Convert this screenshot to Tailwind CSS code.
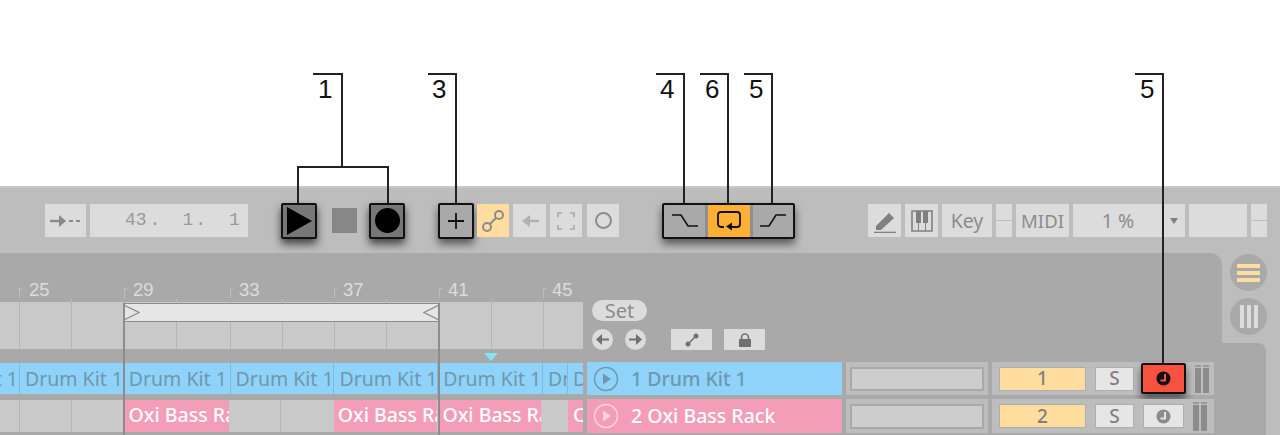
<!DOCTYPE html>
<html lang="en">
<head>
    <meta charset="UTF-8">
    <title>Transport and arrangement controls</title>
    <script src="https://cdn.jsdelivr.net/npm/@tailwindcss/browser@4"></script>
</head>
<body class="bg-white">
<div class="relative w-[1280px] h-[435px] overflow-hidden font-['Noto_Sans',sans-serif]">

    <div class="h-[186px]"></div>

    <!-- Control bar -->
    <div class="h-[67px] bg-[#bdbdbd] border-t-2 border-[#c6c6c6] flex items-center text-[#8c8c8c]">
        <div class="ml-[45px] w-[41px] h-[33px] bg-[#dcdcdc] flex items-center justify-center">
            <svg width="34" height="14" viewBox="0 0 34 14" fill="none"><path d="M1 7h14" stroke="#8a8a8a" stroke-width="2.4"/><path d="M10 1l7 6-7 6z" fill="#8a8a8a"/><path d="M20 7h4M27 7h4" stroke="#8a8a8a" stroke-width="2"/></svg>
        </div>
        <div class="ml-[4px] w-[158px] h-[33px] bg-[#dcdcdc] flex items-center pl-[35px] font-['Liberation_Mono',monospace] text-[18px] text-[#999]">
            <span>43</span><span class="ml-[3px]">.</span><span class="ml-[22px]">1</span><span class="ml-[2px]">.</span><span class="ml-[23px]">1</span>
        </div>

        <div class="ml-[33px] w-[36px] h-[36px] bg-[#777] border-2 border-[#111] rounded-[2px] shadow-[0_5px_8px_rgba(0,0,0,.65)] flex items-center justify-center">
            <svg width="26" height="28" viewBox="0 0 26 28"><path d="M1 0l25 14L1 28z" fill="#000"/></svg>
        </div>
        <div class="ml-[15px] w-[25px] h-[25px] bg-[#878787]"></div>
        <div class="ml-[12px] w-[36px] h-[36px] bg-[#777] border-2 border-[#111] rounded-[2px] shadow-[0_5px_8px_rgba(0,0,0,.65)] flex items-center justify-center">
            <div class="w-[25px] h-[25px] rounded-full bg-black"></div>
        </div>

        <div class="ml-[33px] w-[36px] h-[36px] bg-[#a9a9a9] border-2 border-[#111] rounded-[2px] shadow-[0_5px_8px_rgba(0,0,0,.55)] flex items-center justify-center">
            <svg width="20" height="20" viewBox="0 0 20 20"><path d="M10 2v16M2 10h16" stroke="#111" stroke-width="1.8"/></svg>
        </div>
        <div class="ml-[3px] w-[32px] h-[33px] bg-[#ffdd9e] flex items-center justify-center">
            <svg width="24" height="24" viewBox="0 0 24 24" fill="none" stroke="#8c8c8c" stroke-width="2"><circle cx="6" cy="18" r="4"/><circle cx="18" cy="6" r="4"/><path d="M9 15l6-6"/></svg>
        </div>
        <div class="ml-[4px] w-[33px] h-[33px] bg-[#dcdcdc] flex items-center justify-center">
            <svg width="18" height="14" viewBox="0 0 18 14"><path d="M18 7H7" stroke="#b0b0b0" stroke-width="2.4"/><path d="M9 1L1 7l8 6z" fill="#b0b0b0"/></svg>
        </div>
        <div class="ml-[4px] w-[32px] h-[33px] bg-[#dcdcdc] flex items-center justify-center">
            <svg width="18" height="18" viewBox="0 0 18 18" fill="none" stroke="#a8a8a8" stroke-width="1.6"><path d="M1 5V1h4M13 1h4v4M17 13v4h-4M5 17H1v-4"/></svg>
        </div>
        <div class="ml-[5px] w-[32px] h-[33px] bg-[#dcdcdc] flex items-center justify-center">
            <div class="w-[17px] h-[17px] rounded-full border-2 border-[#8c8c8c]"></div>
        </div>

        <!-- Overdub group -->
        <div class="ml-[43px] w-[133px] h-[36px] border-2 border-[#111] rounded-[2px] shadow-[0_5px_8px_rgba(0,0,0,.55)] flex">
            <div class="w-[44px] bg-[#a9a9a9] flex items-center justify-center border-r-[3px] border-[#8f8f8f]">
                <svg width="28" height="16" viewBox="0 0 28 16" fill="none" stroke="#111" stroke-width="1.6"><path d="M1 2h9l7 11h10"/></svg>
            </div>
            <div class="w-[42px] bg-[#fdb033] flex items-center justify-center">
                <svg width="26" height="20" viewBox="0 0 26 20"><path d="M8 16H5a3 3 0 0 1-3-3V4a3 3 0 0 1 3-3h16a3 3 0 0 1 3 3v9a3 3 0 0 1-3 3h-7" fill="none" stroke="#111" stroke-width="1.8"/><path d="M16 11.500v8l-6-4z" fill="#111"/></svg>
            </div>
            <div class="flex-1 bg-[#a9a9a9] flex items-center justify-center border-l-[3px] border-[#8f8f8f]">
                <svg width="28" height="16" viewBox="0 0 28 16" fill="none" stroke="#111" stroke-width="1.6"><path d="M1 13h9l7-11h10"/></svg>
            </div>
        </div>

        <div class="ml-[73px] w-[33px] h-[33px] bg-[#dcdcdc] flex items-center justify-center">
            <svg width="24" height="24" viewBox="0 0 24 24"><path d="M3 17L16 4l5 5L8 21H3z" fill="#808080"/><path d="M1 23.500h22" stroke="#808080" stroke-width="1.600"/></svg>
        </div>
        <div class="ml-[4px] w-[33px] h-[33px] bg-[#dcdcdc] flex items-center justify-center">
            <svg width="22" height="22" viewBox="0 0 22 22"><path d="M1 1h20v20H1z" fill="none" stroke="#808080" stroke-width="1.6"/><path d="M7.500 1v20M14.500 1v20" stroke="#808080" stroke-width="1"/><path d="M5 1h5v12H5zM12 1h5v12h-5z" fill="#808080"/></svg>
        </div>
        <div class="ml-[4px] w-[50px] h-[33px] bg-[#dcdcdc] flex items-center justify-center text-[19.5px]">Key</div>
        <div class="ml-[4px] w-[16px] h-[33px] flex flex-col gap-px">
            <div class="flex-1 bg-[#dcdcdc]"></div>
            <div class="flex-1 bg-[#dcdcdc]"></div>
        </div>
        <div class="ml-[4px] w-[53px] h-[33px] bg-[#dcdcdc] flex items-center justify-center text-[18.5px]">MIDI</div>
        <div class="ml-[4px] w-[112px] h-[33px] bg-[#dcdcdc] flex items-center text-[19.5px]">
            <span class="w-[90px] text-center">1 %</span>
            <svg width="22" height="6" viewBox="0 0 22 6"><path d="M7 0h8l-4 6z" fill="#808080"/></svg>
        </div>
        <div class="ml-[4px] w-[58px] h-[33px] bg-[#dcdcdc]"></div>
        <div class="ml-[4px] w-[16px] h-[33px] flex flex-col gap-px">
            <div class="flex-1 bg-[#dcdcdc]"></div>
            <div class="flex-1 bg-[#dcdcdc]"></div>
        </div>
    </div>

    <div class="h-[182px] flex bg-[#bdbdbd]">
        <!-- Session / arrangement panel -->
        <div class="w-[1222px] bg-[#a9a9a9] rounded-tr-xl">
            <div class="h-[109px] flex">
                <div class="relative w-[583px]">
                    <!-- Ruler -->
                    <div class="h-[49px] pl-[19px] flex items-end font-['Liberation_Sans',sans-serif] text-[18.5px] leading-[24px] text-[#dcdcdc]">
                        <div class="w-[105px] h-[24px] flex">
                            <div class="self-end mb-[4px] w-[3px] h-[10px] border-l border-t border-[#bdbdbd]"></div>
                            <span class="ml-[7px] w-[42px]">25</span>
                            <div class="self-end w-px h-[3px] bg-[#bdbdbd]"></div>
                        </div>
                        <div class="w-[106px] h-[24px] flex">
                            <div class="self-end mb-[4px] w-[3px] h-[10px] border-l border-t border-[#bdbdbd]"></div>
                            <span class="ml-[6px] w-[43px]">29</span>
                            <div class="self-end w-px h-[3px] bg-[#bdbdbd]"></div>
                        </div>
                        <div class="w-[104px] h-[24px] flex">
                            <div class="self-end mb-[4px] w-[3px] h-[10px] border-l border-t border-[#bdbdbd]"></div>
                            <span class="ml-[6px] w-[43px]">33</span>
                            <div class="self-end w-px h-[3px] bg-[#bdbdbd]"></div>
                        </div>
                        <div class="w-[105px] h-[24px] flex">
                            <div class="self-end mb-[4px] w-[3px] h-[10px] border-l border-t border-[#bdbdbd]"></div>
                            <span class="ml-[6px] w-[43px]">37</span>
                            <div class="self-end w-px h-[3px] bg-[#bdbdbd]"></div>
                        </div>
                        <div class="w-[104px] h-[24px] flex">
                            <div class="self-end mb-[4px] w-[3px] h-[10px] border-l border-t border-[#bdbdbd]"></div>
                            <span class="ml-[6px] w-[43px]">41</span>
                            <div class="self-end w-px h-[3px] bg-[#bdbdbd]"></div>
                        </div>
                        <div class="w-[40px] h-[24px] flex">
                            <div class="self-end mb-[4px] w-[3px] h-[10px] border-l border-t border-[#bdbdbd]"></div>
                            <span class="ml-[6px]">45</span>
                        </div>
                    </div>
                    <!-- Scene grid -->
                    <div class="h-[47px] bg-[#c9c9c9] flex">
                        <div class="w-[20px] border-r border-[#b4b4b4]"></div>
                        <div class="w-[52px] border-r border-[#b4b4b4]"></div>
                        <div class="w-[53px] border-r border-[#b4b4b4]"></div>
                        <div class="w-[52px] border-r border-[#b4b4b4]"></div>
                        <div class="w-[54px] border-r border-[#b4b4b4]"></div>
                        <div class="w-[52px] border-r border-[#b4b4b4]"></div>
                        <div class="w-[52px] border-r border-[#b4b4b4]"></div>
                        <div class="w-[52px] border-r border-[#b4b4b4]"></div>
                        <div class="w-[53px] border-r border-[#b4b4b4]"></div>
                        <div class="w-[52px] border-r border-[#b4b4b4]"></div>
                        <div class="w-[52px] border-r border-[#b4b4b4]"></div>
                    </div>
                    <!-- Loop brace -->
                    <div class="absolute left-[124px] top-[50px] w-[315px] h-[19px] bg-[#e6e6e6] border-y border-[#8c8c8c]">
                        <svg class="absolute left-0 top-0" width="16" height="17" viewBox="0 0 16 17" fill="none" stroke="#8c8c8c" stroke-width="1.2"><path d="M0 1l15 7.500L0 16"/></svg>
                        <svg class="absolute right-0 top-0" width="16" height="17" viewBox="0 0 16 17" fill="none" stroke="#8c8c8c" stroke-width="1.2"><path d="M16 1L1 8.500 16 16"/></svg>
                    </div>
                    <!-- Insert marker -->
                    <svg class="absolute left-[484px] top-[100px]" width="14" height="8" viewBox="0 0 14 8"><path d="M0 0h14L7 8z" fill="#7fe6f2"/></svg>
                </div>
                <div class="ml-[9px] pt-[47px]">
                    <div class="w-[55px] h-[21px] rounded-full bg-[#dcdcdc] flex items-center justify-center text-[20px] text-[#8c8c8c]">Set</div>
                    <div class="mt-[8px] flex items-center">
                        <div class="w-[21px] h-[21px] rounded-full bg-[#dcdcdc] flex items-center justify-center">
                            <svg width="13" height="11" viewBox="0 0 13 11"><path d="M13 5.500H5" stroke="#707070" stroke-width="2"/><path d="M6 0L0 5.500 6 11z" fill="#707070"/></svg>
                        </div>
                        <div class="ml-[12px] w-[21px] h-[21px] rounded-full bg-[#dcdcdc] flex items-center justify-center">
                            <svg width="13" height="11" viewBox="0 0 13 11"><path d="M0 5.500h8" stroke="#707070" stroke-width="2"/><path d="M7 0l6 5.500L7 11z" fill="#707070"/></svg>
                        </div>
                        <div class="ml-[25px] w-[41px] h-[21px] bg-[#dcdcdc] flex items-center justify-center">
                            <svg width="14" height="14" viewBox="0 0 14 14" fill="#707070"><circle cx="3" cy="11" r="2.500"/><circle cx="11" cy="3" r="2.500"/><path d="M3 11l8-8" stroke="#707070" stroke-width="1.6"/></svg>
                        </div>
                        <div class="ml-[12px] w-[41px] h-[21px] bg-[#dcdcdc] flex items-center justify-center">
                            <svg width="14" height="14" viewBox="0 0 14 14"><path d="M3.500 7V4.500a3.500 3.500 0 0 1 7 0V7" fill="none" stroke="#707070" stroke-width="1.6"/><path d="M1 6h12v8H1z" fill="#707070"/></svg>
                        </div>
                    </div>
                </div>
            </div>

            <!-- Track 1 -->
            <div class="h-[33px] flex">
                <div class="w-[583px] h-[31px] my-px flex gap-px bg-[#80b9da] text-[19.5px] leading-[31px] text-[#6f97ad] overflow-hidden whitespace-nowrap">
                    <div class="w-[19px] bg-[#8fd3fa] overflow-hidden flex justify-end pr-px">Kit&nbsp;1</div>
                    <div class="w-[103px] bg-[#8fd3fa] overflow-hidden pl-[5px]">Drum Kit 1</div>
                    <div class="w-[106px] bg-[#8fd3fa] overflow-hidden pl-[5px]">Drum Kit 1</div>
                    <div class="w-[103px] bg-[#8fd3fa] overflow-hidden pl-[5px]">Drum Kit 1</div>
                    <div class="w-[103px] bg-[#8fd3fa] overflow-hidden pl-[5px]">Drum Kit 1</div>
                    <div class="w-[104px] bg-[#8fd3fa] overflow-hidden pl-[5px]">Drum Kit 1</div>
                    <div class="w-[24px] bg-[#8fd3fa] overflow-hidden pl-[5px]">Drum</div>
                    <div class="w-[15px] bg-[#8fd3fa] overflow-hidden pl-[5px]">Drum</div>
                </div>
                <div class="ml-[4px] w-[255px] bg-[#8fd3fa] flex items-center pl-[6px] text-[19.5px] font-medium text-[#6f97ad]">
                    <svg width="26" height="26" viewBox="0 0 26 26" fill="none"><circle cx="13" cy="13" r="11.500" stroke="#6f97ad" stroke-width="1.500"/><path d="M10 7.500l8 5.500-8 5.500z" fill="#6f97ad"/></svg>
                    <span class="ml-[12px]">1 Drum Kit 1</span>
                </div>
                <div class="ml-[4px] w-[142px] bg-[#bdbdbd] p-[4px] pt-[5px]"><div class="h-full bg-[#cdcdcd] border-2 border-[#a9a9a9]"></div></div>
                <div class="ml-[4px] w-[222px] bg-[#bdbdbd] flex items-center">
                    <div class="ml-[7px] w-[87px] h-[24px] bg-[#ffdd9e] border border-[#aeaeae] flex items-center justify-center text-[19px] font-medium text-[#808080]">1</div>
                    <div class="ml-[9px] w-[39px] h-[24px] bg-[#e6e6e6] border border-[#aeaeae] flex items-center justify-center text-[19px] font-medium text-[#808080]">S</div>
                    <div class="ml-[7px] w-[45px] h-[31px] bg-[#f75240] border-2 border-[#111] rounded-[2px] shadow-[0_5px_8px_rgba(0,0,0,.55)] flex items-center justify-center">
                        <svg width="15" height="15" viewBox="0 0 15 15"><circle cx="7.500" cy="7.500" r="7" fill="#111"/><path d="M9 3v6.500H4.500" fill="none" stroke="#f75240" stroke-width="2"/></svg>
                    </div>
                    <div class="ml-[9px] flex gap-[2px]">
                        <div class="w-[6px] flex flex-col gap-px"><div class="h-[2px] bg-[#9a9a9a]"></div><div class="h-[25px] bg-[#8c8c8c]"></div></div>
                        <div class="w-[6px] flex flex-col gap-px"><div class="h-[2px] bg-[#9a9a9a]"></div><div class="h-[25px] bg-[#8c8c8c]"></div></div>
                    </div>
                </div>
            </div>

            <!-- Track 2 -->
            <div class="mt-[4px] h-[34px] flex">
                <div class="w-[583px] h-[32px] my-px flex text-[19.5px] leading-[30px] font-medium text-white overflow-hidden whitespace-nowrap bg-[#c9c9c9]">
                    <div class="w-[20px] border-r border-[#b4b4b4]"></div>
                    <div class="w-[52px] border-r border-[#b4b4b4]"></div>
                    <div class="w-[53px]"></div>
                    <div class="w-[105px] bg-[#f49db8] overflow-hidden pl-[4px]">Oxi Bass Rack</div>
                    <div class="w-[52px] border-r border-[#b4b4b4]"></div>
                    <div class="w-[53px]"></div>
                    <div class="w-[104px] bg-[#f49db8] overflow-hidden pl-[4px]">Oxi Bass Rack</div>
                    <div class="w-[2px]"></div>
                    <div class="w-[102px] bg-[#f49db8] overflow-hidden pl-[3px]">Oxi Bass Rack</div>
                    <div class="w-[27px]"></div>
                    <div class="w-[15px] bg-[#f49db8] overflow-hidden pl-[5px]">Oxi</div>
                </div>
                <div class="ml-[4px] w-[255px] bg-[#f49db8] flex items-center pl-[6px] text-[19.5px] font-medium text-white">
                    <svg width="26" height="26" viewBox="0 0 26 26" fill="none"><circle cx="13" cy="13" r="11.500" stroke="#fbd4e0" stroke-width="1.500"/><path d="M10 7.500l8 5.500-8 5.500z" fill="#fbd4e0"/></svg>
                    <span class="ml-[12px]">2 Oxi Bass Rack</span>
                </div>
                <div class="ml-[4px] w-[142px] bg-[#bdbdbd] p-[4px] pt-[5px]"><div class="h-full bg-[#cdcdcd] border-2 border-[#a9a9a9]"></div></div>
                <div class="ml-[4px] w-[222px] bg-[#bdbdbd] flex items-center">
                    <div class="ml-[7px] w-[87px] h-[24px] bg-[#ffdd9e] border border-[#aeaeae] flex items-center justify-center text-[19px] font-medium text-[#808080]">2</div>
                    <div class="ml-[9px] w-[39px] h-[24px] bg-[#e6e6e6] border border-[#aeaeae] flex items-center justify-center text-[19px] font-medium text-[#808080]">S</div>
                    <div class="ml-[9px] w-[41px] h-[24px] bg-[#e6e6e6] border border-[#aeaeae] flex items-center justify-center">
                        <svg width="15" height="15" viewBox="0 0 15 15"><circle cx="7.500" cy="7.500" r="7" fill="#8c8c8c"/><path d="M9 3v6.500H4.500" fill="none" stroke="#e6e6e6" stroke-width="2"/></svg>
                    </div>
                    <div class="ml-[9px] flex gap-[2px]">
                        <div class="w-[6px] flex flex-col gap-px"><div class="h-[2px] bg-[#9a9a9a]"></div><div class="h-[26px] bg-[#8c8c8c]"></div></div>
                        <div class="w-[6px] flex flex-col gap-px"><div class="h-[2px] bg-[#9a9a9a]"></div><div class="h-[26px] bg-[#8c8c8c]"></div></div>
                    </div>
                </div>
            </div>
        </div>

        <!-- View selector strip -->
        <div class="w-[58px] flex flex-col">
            <div class="h-[90px] pl-[8px] pt-[1px]">
                <div class="w-[37px] h-[37px] rounded-full bg-[#a9a9a9] flex flex-col items-center justify-center gap-[3px]">
                    <div class="w-[23px] h-[4px] bg-[#ffdd9e]"></div>
                    <div class="w-[23px] h-[4px] bg-[#ffdd9e]"></div>
                    <div class="w-[23px] h-[4px] bg-[#ffdd9e]"></div>
                </div>
                <div class="mt-[7px] w-[37px] h-[37px] rounded-full bg-[#a9a9a9] flex items-center justify-center gap-[3px]">
                    <div class="w-[4px] h-[23px] bg-[#dcdcdc]"></div>
                    <div class="w-[4px] h-[23px] bg-[#dcdcdc]"></div>
                    <div class="w-[4px] h-[23px] bg-[#dcdcdc]"></div>
                </div>
            </div>
            <div class="flex-1 w-[44px] bg-[#a9a9a9] rounded-tr-lg"></div>
        </div>
    </div>

    <!-- Loop locators drawn over the tracks -->
    <div class="absolute left-[123px] top-[303px] w-[2px] h-[132px] bg-[#8c8c8c]"></div>
    <div class="absolute left-[438px] top-[303px] w-[2px] h-[132px] bg-[#8c8c8c]"></div>

    <!-- Callouts -->
    <div class="absolute left-[313px] top-[73px] w-[30px] h-[94px] border-t-2 border-r-2 border-[#222]"></div>
    <div class="absolute left-[297px] top-[166px] w-[92px] h-[37px] border-t-2 border-x-2 border-[#222]"></div>
    <div class="absolute left-[428px] top-[73px] w-[29px] h-[130px] border-t-2 border-r-2 border-[#222]"></div>
    <div class="absolute left-[656px] top-[73px] w-[29px] h-[130px] border-t-2 border-r-2 border-[#222]"></div>
    <div class="absolute left-[700px] top-[73px] w-[29px] h-[130px] border-t-2 border-r-2 border-[#222]"></div>
    <div class="absolute left-[744px] top-[73px] w-[29px] h-[130px] border-t-2 border-r-2 border-[#222]"></div>
    <div class="absolute left-[1135px] top-[73px] w-[29px] h-[291px] border-t-2 border-r-2 border-[#222]"></div>
    <span class="absolute left-[318px] top-[71px] text-[26px] leading-[36px] font-['Liberation_Sans',sans-serif] text-[#111]">1</span>
    <span class="absolute left-[432px] top-[71px] text-[26px] leading-[36px] font-['Liberation_Sans',sans-serif] text-[#111]">3</span>
    <span class="absolute left-[660px] top-[71px] text-[26px] leading-[36px] font-['Liberation_Sans',sans-serif] text-[#111]">4</span>
    <span class="absolute left-[705px] top-[71px] text-[26px] leading-[36px] font-['Liberation_Sans',sans-serif] text-[#111]">6</span>
    <span class="absolute left-[749px] top-[71px] text-[26px] leading-[36px] font-['Liberation_Sans',sans-serif] text-[#111]">5</span>
    <span class="absolute left-[1140px] top-[71px] text-[26px] leading-[36px] font-['Liberation_Sans',sans-serif] text-[#111]">5</span>
</div>
</body>
</html>
